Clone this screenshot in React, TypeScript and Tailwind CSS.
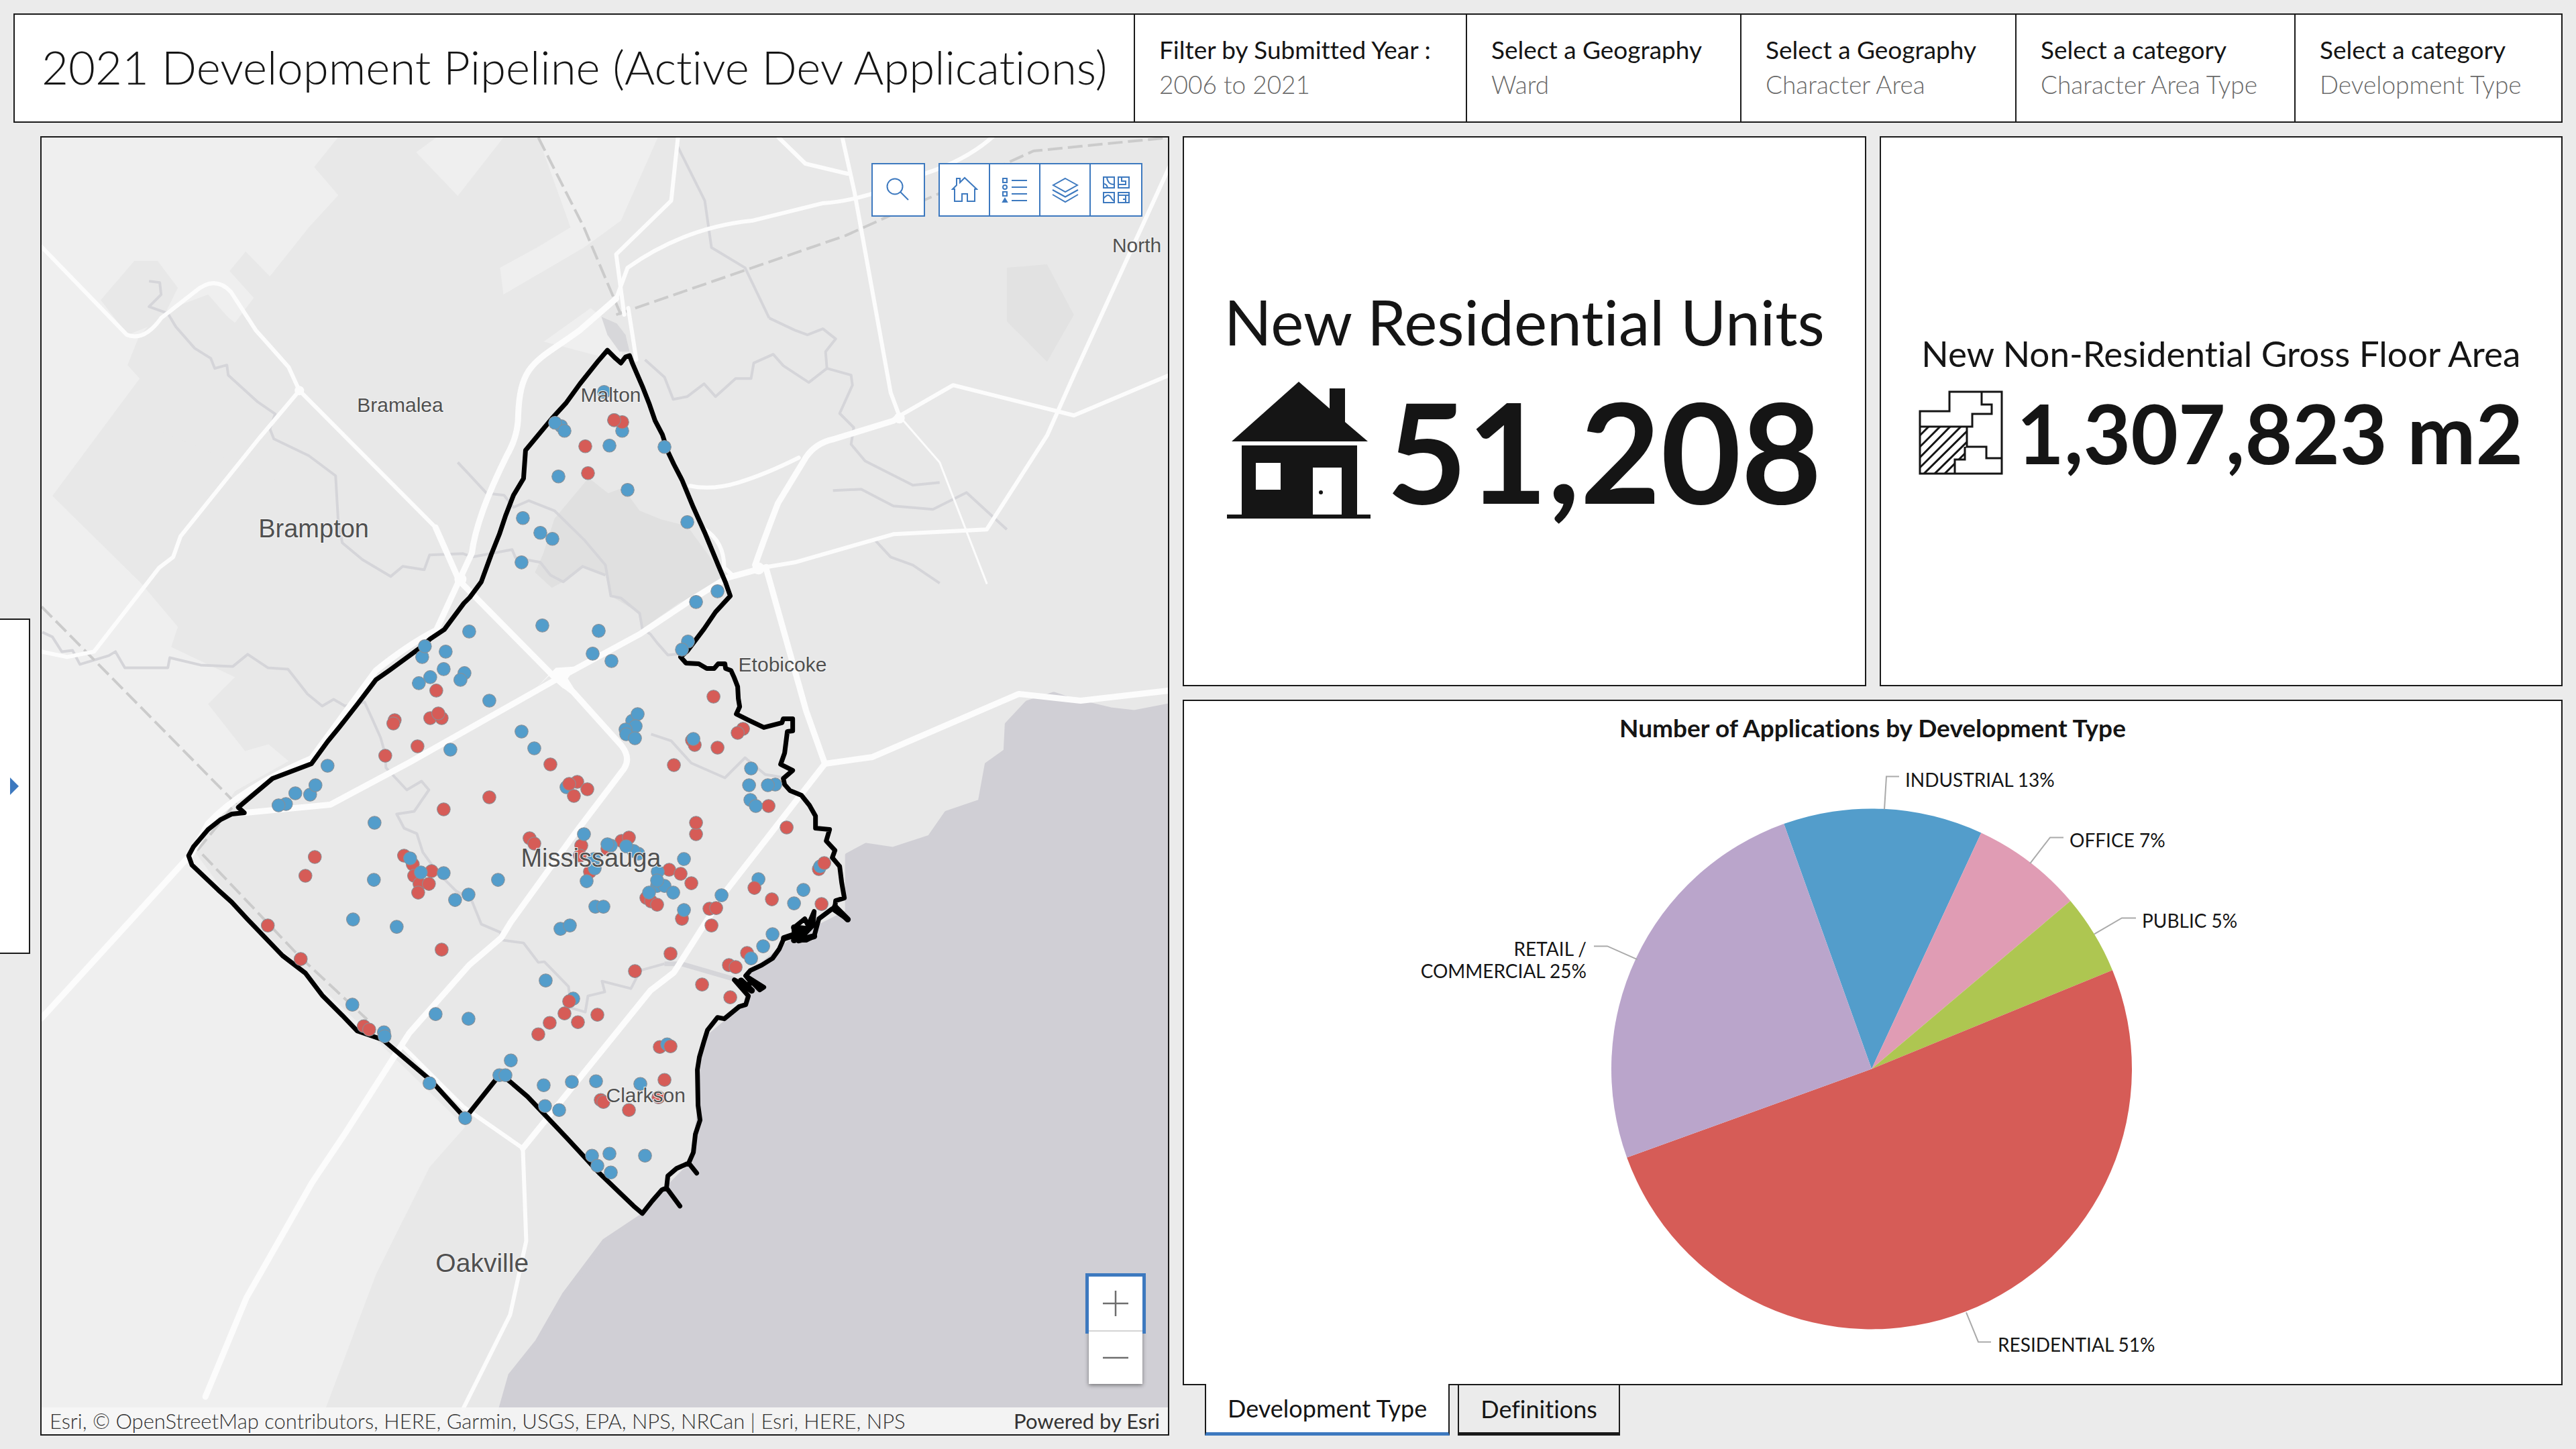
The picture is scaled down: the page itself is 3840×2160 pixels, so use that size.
import { type ReactNode, useState } from "react";
import { clsx } from "clsx";

type Point = [number, number];

const FILTERS = [
  { label: "Filter by Submitted Year :", value: "2006 to 2021" },
  { label: "Select a Geography", value: "Ward" },
  { label: "Select a Geography", value: "Character Area" },
  { label: "Select a category", value: "Character Area Type" },
  { label: "Select a category", value: "Development Type" },
];

const BOUNDARY =
  "M905 523L917 535L925 542L932 533L938 531L942 542L958 579L967 602L976 628L987 649L995 674L1004 693L1016 716L1033 757L1051 797L1070 843L1081 869L1088 889L1066 913L1049 938L1024 971L1014 980L1022 989L1041 990L1053 997L1064 997L1070 990L1080 990L1081 997L1089 1000L1094 1011L1099 1024L1100 1042L1102 1054L1097 1065L1115 1074L1138 1085L1165 1078L1167 1072L1181 1072L1181 1090L1173 1091L1171 1107L1169 1123L1163 1140L1181 1149L1167 1161L1169 1170L1177 1179L1194 1186L1206 1201L1215 1217L1215 1235L1236 1237L1231 1254L1244 1268L1240 1279L1251 1292L1254 1316L1258 1339L1245 1343L1244 1352L1263 1371L1240 1355L1220 1370L1213 1396L1201 1402L1183 1402L1183 1383L1199 1370L1204 1380L1213 1359L1211 1380L1193 1399L1179 1395L1168 1399L1161 1415L1151 1429L1135 1439L1118 1447L1111 1455L1138 1472L1132 1476L1111 1455L1120 1466L1108 1469L1094 1461L1108 1477L1115 1485L1111 1498L1101 1501L1079 1519L1069 1517L1054 1536L1049 1552L1042 1576L1039 1595L1040 1648L1043 1670L1036 1691L1033 1718L1026 1734L1038 1749L1026 1734L1008 1742L995 1753L993 1771L1013 1798L993 1771L986 1774L972 1790L957 1809L944 1798L894 1750L844 1696L786 1635L758 1611L744 1603L693 1667L642 1611L570 1550L532 1537L510 1514L480 1484L455 1451L421 1425L369 1371L345 1345L325 1327L286 1290L281 1276L288 1263L310 1237L329 1222L345 1214L364 1212L355 1204L381 1182L406 1161L464 1139L488 1106L506 1084L532 1051L560 1014L580 1000L625 967L641 953L662 939L691 900L700 891L717 868L732 827L744 797L753 770L765 739L780 714L783 672L822 625L843 602L864 573L892 538Z";

const HARBOUR = "M1183 1402L1201 1385L1183 1383L1190 1402L1213 1396M1168 1399L1195 1390M1108 1469L1120 1477L1104 1462M1244 1352L1263 1371";

const HIGHWAYS = [
  "M62 1518L196 1371L286 1272L310 1228Q360 1175 464 1131L560 1000Q610 960 650 940L684 866L703 825Q710 770 756 678Q772 650 772 620C775 540 800 540 864 493L918 446",
  "M366 1212L492 1200L610 1137L826 1015L953 946L1028 896L1083 862L1142 846",
  "M826 1010L854 1032L926 1112Q940 1130 930 1146L858 1241L761 1375L747 1398L699 1439L610 1540L514 1690L465 1763L367 1935L306 2082",
  "M649 787L684 866L826 1010",
  "M1229 1139L1079 1332L1004 1450L969 1477L779 1712",
  "M1142 850L1201 1060L1229 1139L1300 1129L1518 1035L1610 1045L1742 1030",
  "M1125 843Q1140 800 1159 751L1201 682Q1215 662 1240 656L1331 628L1340 621",
];

const ROADS = [
  "M918 446L935 400Q1020 340 1120 330L1225 304Q1290 300 1377 260Q1440 240 1480 204",
  "M62 369L189 500Q215 510 240 475L290 436Q320 410 344 436L381 493L430 548L446 583L649 787",
  "M446 583L387 653L269 800L258 831L237 847L140 972L100 980L62 972",
  "M936 460L948 537M930 470L918 380L1000 300L1010 206M1049 789Q1079 808 1079 847L1091 858",
  "M1160 206L1200 245L1263 260M1255 206L1273 287L1297 420L1327 586L1340 621",
  "M1028 725Q1060 732 1100 720T1190 683",
  "M1142 846L1184 839L1331 797L1470 790L1560 650L1600 560L1742 250",
  "M1340 621L1420 575L1600 620L1742 560",
  "M779 1712L784 1850L760 1960L690 2100",
  "M779 1712L690 1650L600 1560",
];

const THIN_ROADS = ["M1340 621L1400 690L1470 870"];

const STREAMS = [
  "M222 420L238 422L240 440L222 458L250 468L262 488L290 520L314 535L320 550L338 545L340 560L384 600L410 618L402 640L408 655L460 680L500 710L504 780L510 810L540 835L582 860L600 845L632 850L640 828L690 826L704 831",
  "M704 831L763 820L768 832L805 839L820 858L839 868L868 845L902 858",
  "M63 943L78 950L92 972L108 970L119 991L162 978L172 972L186 996L250 996L253 981L299 992L347 994L369 976L399 996L429 998L458 1035L480 1053L497 1043L514 1053L543 1047L554 1071L567 1100L574 1125L575 1145L606 1178L628 1165L639 1178L617 1210L591 1214L602 1235L621 1243L630 1271L651 1300L680 1329L702 1341L717 1378L745 1390L750 1402L780 1406L802 1435L811 1434L847 1471L851 1503L872 1509L876 1485L901 1479L897 1463L940 1474L954 1447L990 1437",
  "M1146 475L1184 493L1203 500L1226 491L1245 506L1230 525L1232 550L1205 571L1167 546L1152 529L1123 542L1119 565L1096 565L1066 592L1049 573L1024 592L1003 596L990 563L961 537",
  "M1232 550L1268 560L1270 575L1251 617L1272 638L1268 663L1289 688L1360 724L1400 720",
  "M682 690L700 709L725 736L751 739L765 757L788 747L826 762L870 805L902 843L910 889L925 892L953 915L957 938L969 946L980 960L995 977L1014 975",
  "M970 1095L1000 1105L1030 1138L1080 1160L1110 1130L1140 1155L1170 1160",
  "M1241 732L1283 730L1331 755L1390 760L1440 735L1500 790M1302 804L1327 831L1360 843L1400 870",
  "M1010 220L1050 300L1060 370L1110 400L1146 475",
];

const RAILS = ["M62 905L351 1198L295 1267L447 1427L547 1520", "M802 206L870 340L925 470", "M918 470L1260 352L1540 226L1742 206"];

// Residential markers that sit under the non-residential layer
const RESIDENTIAL_SITES: Point[] = [
  [915, 627], [872, 666], [876, 706], [1063, 1039], [650, 1030], [641, 1071], [658, 1071], [653, 1064], [588, 1074],
  [586, 1079], [574, 1127], [622, 1113], [820, 1140], [729, 1189], [661, 1207], [469, 1278], [455, 1306], [602, 1276],
  [615, 1289], [617, 1306], [643, 1299], [625, 1318], [639, 1318], [623, 1331], [658, 1416], [399, 1380], [448, 1430],
  [542, 1530], [550, 1535], [789, 1250], [796, 1258], [1107, 1087], [1099, 1093], [1069, 1115], [1031, 1104],
  [1035, 1111], [1004, 1141], [1037, 1244], [1037, 1227], [1145, 1202], [1172, 1234], [866, 1261], [864, 1276],
  [879, 1300], [905, 1266], [926, 1254], [937, 1249], [997, 1297], [1014, 1303], [1030, 1317], [963, 1339],
  [970, 1344], [979, 1349], [1016, 1370], [1057, 1355], [1067, 1354], [1060, 1380], [1150, 1341], [1220, 1296],
  [1224, 1348], [999, 1422], [946, 1448], [1113, 1421], [1086, 1439], [1096, 1442], [1046, 1468], [1088, 1487],
  [841, 1511], [861, 1524], [890, 1513], [819, 1525], [802, 1542], [983, 1561], [990, 1610], [895, 1640], [899, 1643],
  [981, 1636], [937, 1655],
];

const OTHER_SITES: Point[] = [
  [900, 585], [836, 636], [827, 631], [841, 643], [927, 643], [908, 665], [990, 667], [832, 711], [935, 731],
  [779, 773], [805, 795], [823, 804], [777, 839], [1024, 779], [1069, 882], [1037, 898], [808, 933], [892, 941],
  [883, 975], [911, 986], [1025, 957], [1016, 969], [729, 1045], [699, 942], [629, 980], [633, 964], [664, 972],
  [661, 998], [692, 1004], [686, 1014], [624, 1019], [641, 1010], [777, 1091], [796, 1116], [671, 1118], [488, 1142],
  [462, 1185], [470, 1171], [440, 1183], [426, 1199], [415, 1201], [558, 1227], [557, 1312], [526, 1371], [591, 1382],
  [611, 1280], [627, 1301], [661, 1302], [678, 1342], [698, 1334], [742, 1312], [525, 1498], [649, 1512], [698, 1519],
  [813, 1462], [572, 1539], [573, 1545], [942, 1075], [950, 1065], [947, 1083], [932, 1088], [933, 1095], [946, 1101],
  [1033, 1102], [1119, 1146], [1116, 1171], [1155, 1170], [1144, 1171], [1118, 1193], [1126, 1202], [844, 1174],
  [870, 1244], [910, 1261], [905, 1259], [951, 1273], [944, 1269], [933, 1262], [1019, 1281], [885, 1281],
  [886, 1295], [874, 1314], [887, 1352], [899, 1352], [835, 1385], [849, 1380], [980, 1300], [979, 1321], [990, 1321],
  [979, 1313], [967, 1331], [1003, 1331], [1019, 1357], [1075, 1335], [1130, 1311], [1197, 1327], [1183, 1347],
  [1151, 1393], [1137, 1411], [1119, 1429], [854, 1489], [761, 1581], [744, 1603], [753, 1603], [810, 1618],
  [852, 1613], [888, 1612], [812, 1649], [833, 1655], [954, 1616], [994, 1557], [882, 1723], [890, 1738], [908, 1720],
  [910, 1748], [961, 1723], [1222, 1292], [640, 1615], [693, 1667],
];

const RESIDENTIAL_TOP: Point[] = [
  [927, 630], [915, 627], [855, 1187], [860, 1166], [848, 1169], [875, 1177], [1124, 1324], [1228, 1287], [848, 1493],
  [999, 1560],
];

const PLACES = [
  { name: "Brampton", x: 385, y: 802, size: 38 },
  { name: "Bramalea", x: 532, y: 615, size: 30 },
  { name: "Malton", x: 865, y: 600, size: 30 },
  { name: "Etobicoke", x: 1100, y: 1002, size: 30 },
  { name: "Mississauga", x: 776, y: 1292, size: 38 },
  { name: "Clarkson", x: 903, y: 1643, size: 30 },
  { name: "Oakville", x: 649, y: 1896, size: 39 },
  { name: "North", x: 1657, y: 377, size: 30 },
];

const SLICES = [
  { from: -19.7, to: 24.9, fill: "#539dcb" },
  { from: 24.9, to: 49.8, fill: "#e09cb4" },
  { from: 49.8, to: 67.7, fill: "#aec651" },
  { from: 67.7, to: 250.1, fill: "#d65c57" },
  { from: 250.1, to: 340.3, fill: "#baa5cb" },
];

const SLICE_LABELS = [
  { text: "INDUSTRIAL 13%", x: 2840, y: 1174, line: "M2809 1207L2812 1158H2831" },
  { text: "OFFICE 7%", x: 3085, y: 1264, line: "M3026 1288L3056 1249H3076" },
  { text: "PUBLIC 5%", x: 3193, y: 1384, line: "M3122 1393L3163 1369H3184" },
  { text: "RESIDENTIAL 51%", x: 2978, y: 2016, line: "M2931 1957L2949 2001H2968" },
];

function slicePath(from: number, to: number) {
  const [cx, cy, r] = [2790, 1594, 388];
  const at = (deg: number) => {
    const rad = (deg * Math.PI) / 180;
    return `${cx + r * Math.sin(rad)} ${cy - r * Math.cos(rad)}`;
  };
  return `M${cx} ${cy}L${at(from)}A${r} ${r} 0 ${to - from > 180 ? 1 : 0} 1 ${at(to)}Z`;
}

function Sites({ points, fill }: { points: Point[]; fill: string }) {
  return (
    <g fill={fill} stroke="#8a8f95" strokeWidth={1}>
      {points.map(([x, y], i) => (
        <circle key={i} cx={x} cy={y} r={9.8} />
      ))}
    </g>
  );
}

function PipelineMap() {
  return (
    <svg
      viewBox="61 206 1680 1932"
      preserveAspectRatio="xMidYMid slice"
      className="absolute inset-0 size-full"
      role="img"
      aria-label="Map of active development applications"
    >
      <rect x="60" y="204" width="1684" height="1936" fill="#e8e8e8" />
      <g fill="#efefef">
        <path d="M60 204H505L468 250L504 292L460 340L402 413L366 376L342 405L378 445L350 482L308 448L265 487L240 463L206 505L190 545L208 565L78 740L210 870L265 935L255 965L350 1010L310 1050L365 1120L400 1110L430 1135L350 1180L290 1270L345 1345L560 1550L693 1680L640 1740L560 1900L470 2140H60Z" />
        <path d="M650 206H750L682 293L620 228ZM802 206H980L925 330L870 370L750 440L745 400L800 370L850 340Z" />
        <path d="M810 510L880 460L930 500L925 540Z" />
      </g>
      <g fill="#e8e8e8">
        <path d="M150 448L200 390H235L265 430L240 480L190 500Z" />
        <path d="M230 470L310 440L380 520L420 720L230 640Z" />
      </g>
      <path
        d="M877 713L906 736L928 728L953 762L985 775L1024 785L1083 866L1011 900L957 938L953 915L910 889L902 858L868 845L839 868L822 877L797 854L809 827L826 774Z"
        fill="#e0e0e0"
      />
      <path d="M1500 400L1560 395L1600 470L1560 540L1500 480Z" fill="#e2e2e2" />
      <path d="M896 473L905 500L923 525H938L932 500L919 483Z" fill="#d7d7da" />
      <path
        d="M1742 1052L1690 1062L1655 1058L1600 1045L1570 1035L1530 1048L1500 1080L1498 1120L1470 1140L1460 1195L1410 1212L1385 1248L1330 1266L1290 1260L1262 1275L1262 1360L1180 1402L1120 1450L1110 1500L1050 1550L1040 1670L1030 1735L990 1775L957 1812L900 1850L840 1930L800 2000L760 2050L735 2138H1742Z"
        fill="#d0cfd5"
        stroke="#d0cfd5"
        strokeWidth={6}
        strokeLinejoin="round"
      />
      <g fill="none" stroke="#d5d5d9" strokeLinejoin="round">
        {STREAMS.map((d) => (
          <path key={d} d={d} strokeWidth={4} />
        ))}
        <path d="M990 1437H1015L1094 1460" strokeWidth={7} />
      </g>
      <g fill="none" stroke="#cbcbcb" strokeWidth={4} strokeDasharray="22 8">
        {RAILS.map((d) => (
          <path key={d} d={d} />
        ))}
      </g>
      <g fill="none" stroke="#fcfcfc" strokeLinejoin="round" strokeLinecap="round">
        {THIN_ROADS.map((d) => (
          <path key={d} d={d} strokeWidth={3} />
        ))}
        {ROADS.map((d) => (
          <path key={d} d={d} strokeWidth={6} />
        ))}
        {HIGHWAYS.map((d) => (
          <path key={d} d={d} strokeWidth={9} />
        ))}
      </g>
      <g fill="#fcfcfc">
        <path d="M800 1025L828 996L858 994L846 1012L862 1038L838 1026L818 1008Z" />
        <circle cx="686" cy="864" r="9" />
        <circle cx="1130" cy="848" r="9" />
        <circle cx="1340" cy="624" r="8" />
        <circle cx="446" cy="583" r="7" />
      </g>
      <g fill="none" stroke="#000" strokeLinejoin="round">
        <path d={BOUNDARY} strokeWidth={7} />
        <path d={HARBOUR} strokeWidth={9} strokeLinecap="round" />
      </g>
      <Sites points={RESIDENTIAL_SITES} fill="#d65c57" />
      <Sites points={OTHER_SITES} fill="#539dcb" />
      <Sites points={RESIDENTIAL_TOP} fill="#d65c57" />
      <g fill="#505050" stroke="#f4f4f4" strokeWidth={2} paintOrder="stroke" className="font-['Liberation_Sans',sans-serif]">
        {PLACES.map((place) => (
          <text key={place.name} x={place.x} y={place.y} fontSize={place.size}>
            {place.name}
          </text>
        ))}
      </g>
    </svg>
  );
}

function ToolButton({ label, className, children }: { label: string; className?: string; children: ReactNode }) {
  return (
    <button type="button" aria-label={label} className={clsx("flex h-[76px] items-center justify-center bg-white", className)}>
      <svg viewBox="0 0 40 40" className="size-10" fill="none" stroke="#3d79bf" strokeWidth={2}>
        {children}
      </svg>
    </button>
  );
}

function MapToolbar() {
  return (
    <div className="absolute top-[38px] right-[38px] flex gap-5">
      <div className="border-2 border-[#3d79bf]">
        <ToolButton label="Search" className="w-[76px]">
          <circle cx="15" cy="15" r="11.500" />
          <path d="M23 23L35 35" />
        </ToolButton>
      </div>
      <div className="flex divide-x-2 divide-[#3d79bf] border-2 border-[#3d79bf]">
        <ToolButton label="Default extent" className="w-[75px]">
          <path d="M2 19H5V37H16V26H24V37H35V19H38L20 2L13 9V3H8V13Z" />
        </ToolButton>
        <ToolButton label="Legend" className="w-[75px]">
          <path d="M2 3H8V9H2ZM2 23H8V29H2ZM15 6H38M15 16H38M15 26H38M15 36H38" />
          <circle cx="5" cy="16" r="3" />
          <path d="M5 33L8 38H2Z" fill="#3d79bf" />
        </ToolButton>
        <ToolButton label="Layers" className="w-[75px]">
          <path d="M20 3L38 13L20 23L2 13ZM1 20L20 30.500L39 20M1 27L20 38L39 27" />
        </ToolButton>
        <ToolButton label="Basemaps" className="w-[75px]">
          <path d="M1 1H17V17H1ZM23 1H39V17H23ZM1 24H17V39H1ZM23 24H39V39H23Z" />
          <path d="M6 1Q7 12 17 12M1 11Q6 11 7 17M28 1V7H34V12H23M1 33Q8 24 12 31T17 35M23 28H39M34 28V39M34 34H30" />
        </ToolButton>
      </div>
    </div>
  );
}

function ZoomControl() {
  return (
    <div className="absolute right-[38px] bottom-[75px] flex flex-col shadow-[0_2px_6px_rgba(0,0,0,0.45)]">
      <button
        type="button"
        aria-label="Zoom in"
        className="flex h-20 w-20 items-center justify-center bg-white outline-5 outline-[#3d79bf]"
      >
        <svg viewBox="0 0 40 40" className="size-10" stroke="#6e6e6e" strokeWidth={2.5}>
          <path d="M1 20H39M20 1V39" />
        </svg>
      </button>
      <button
        type="button"
        aria-label="Zoom out"
        className="relative flex h-20 w-20 items-center justify-center border-t-2 border-[#d4d4d4] bg-white"
      >
        <svg viewBox="0 0 40 40" className="size-10" stroke="#6e6e6e" strokeWidth={2.5}>
          <path d="M1 20H39" />
        </svg>
      </button>
    </div>
  );
}

function HouseIcon() {
  return (
    <svg viewBox="1833 568 214 205" className="h-[205px] w-[214px] shrink-0" fill="#151515" aria-hidden="true">
      <path d="M1940 568L1986 608V578H2009V628L2043 657H1840Z" />
      <path fillRule="evenodd" d="M1855 663H2027V767H1855ZM1876 689V729H1913V689ZM1961 696V767H2004V696Z" />
      <path d="M1833 766H2047V772H1833Z" />
      <circle cx="1973" cy="733" r="3" />
    </svg>
  );
}

function FloorPlanIcon() {
  return (
    <svg viewBox="2860 581 126 126" className="size-[126px] shrink-0" fill="none" stroke="#151515" strokeWidth={3} aria-hidden="true">
      <clipPath id="hatch">
        <path d="M2862 635H2932V665H2929V684H2914V705H2862Z" />
      </clipPath>
      <path d="M2862 612H2906V583H2984V705H2862Z" />
      <path d="M2954 583V602H2969V616H2940V635H2862M2932 635V665H2961V682H2984M2929 665V684H2914V705" />
      <path
        clipPath="url(#hatch)"
        d="M2860 650L2876 634M2860 667L2893 634M2860 683L2908 634M2860 698L2924 634M2866 707L2940 634M2882 707L2940 650M2897 707L2940 664"
      />
    </svg>
  );
}

export default function App() {
  const [tab, setTab] = useState("Development Type");

  return (
    <div className="flex h-screen flex-col gap-5 bg-[#ebebeb] py-5 font-[Lato,sans-serif] text-[#151515] [font-variant-ligatures:none]">
      <header className="mx-5 grid h-[163px] shrink-0 grid-cols-[1668fr_495fr_409fr_410fr_416fr_398fr] border-2 border-[#1a1a1a] bg-white">
        <div className="flex min-w-0 items-center pb-1 pl-10">
          <h1 className="text-[69px] font-light whitespace-nowrap">2021 Development Pipeline (Active Dev Applications)</h1>
        </div>
        {FILTERS.map((filter) => (
          <button
            key={filter.value}
            type="button"
            className="flex min-w-0 flex-col justify-center border-l-2 border-[#1a1a1a] pb-1 pl-9 text-left text-[37px] leading-[52px] whitespace-nowrap"
          >
            <span>{filter.label}</span>
            <span className="font-light text-[#6a6a6a]">{filter.value}</span>
          </button>
        ))}
      </header>

      <main className="flex min-h-0 flex-1 pr-5">
        <div className="flex w-[60px] shrink-0 flex-col justify-center">
          <button
            type="button"
            aria-label="Expand side panel"
            className="flex h-[500px] w-[45px] items-center justify-center border-2 border-l-0 border-[#1a1a1a] bg-white"
          >
            <svg viewBox="0 0 13 26" className="h-[26px] w-[13px]" fill="#3d79bf">
              <path d="M0 0L13 13L0 26Z" />
            </svg>
          </button>
        </div>

        <section className="relative mr-5 min-w-0 flex-[1679] overflow-hidden border-2 border-[#1a1a1a]">
          <PipelineMap />
          <MapToolbar />
          <ZoomControl />
          <div className="absolute inset-x-0 bottom-0 flex h-10 items-center justify-between bg-[#f6f6f6]/90 px-3 text-[31px] whitespace-nowrap text-[#323232]">
            <span className="font-light">
              Esri, © OpenStreetMap contributors, HERE, Garmin, USGS, EPA, NPS, NRCan | Esri, HERE, NPS
            </span>
            <span>
              Powered by <a href="#esri">Esri</a>
            </span>
          </div>
        </section>

        <div className="flex min-w-0 flex-[2057] flex-col">
          <div className="flex min-h-0 flex-[822] gap-5">
            <section className="flex flex-1 flex-col items-center justify-center border-2 border-[#1a1a1a] bg-white pb-2">
              <h2 className="text-[93px] leading-[124px] whitespace-nowrap">New Residential Units</h2>
              <div className="flex items-center gap-6">
                <HouseIcon />
                <span className="text-[207px] leading-[260px] font-bold">51,208</span>
              </div>
            </section>
            <section className="flex flex-1 flex-col items-center justify-center border-2 border-[#1a1a1a] bg-white pb-1">
              <h2 className="text-[53px] leading-[68px] whitespace-nowrap">New Non-Residential Gross Floor Area</h2>
              <div className="flex items-center gap-5">
                <FloorPlanIcon />
                <span className="text-[122px] leading-[168px] font-bold whitespace-nowrap">1,307,823 m2</span>
              </div>
            </section>
          </div>

          <section className="mt-5 flex min-h-0 flex-[1020] flex-col border-2 border-[#1a1a1a] bg-white">
            <h2 className="pt-2.5 pb-1 text-center text-[37px] leading-[60px] font-bold">
              Number of Applications by Development Type
            </h2>
            <svg viewBox="1765 1120 2053 943" className="min-h-0 w-full flex-1" role="img" aria-label="Applications by development type">
              {SLICES.map((slice) => (
                <path key={slice.fill} d={slicePath(slice.from, slice.to)} fill={slice.fill} />
              ))}
              <g fill="#151515" fontSize={28}>
                {SLICE_LABELS.map((label) => (
                  <g key={label.text}>
                    <path d={label.line} fill="none" stroke="#aaa" strokeWidth={2} />
                    <text x={label.x} y={label.y}>
                      {label.text}
                    </text>
                  </g>
                ))}
                <path d="M2441 1431L2396 1411H2376" fill="none" stroke="#aaa" strokeWidth={2} />
                <text x={2365} y={1426} textAnchor="end">
                  RETAIL /
                </text>
                <text x={2365} y={1459} textAnchor="end">
                  COMMERCIAL 25%
                </text>
              </g>
            </svg>
          </section>

          <div role="tablist" className="z-10 -mt-[2px] flex h-[77px] shrink-0 gap-3 pl-[33px] text-[36px]">
            {["Development Type", "Definitions"].map((name) => (
              <button
                key={name}
                type="button"
                role="tab"
                aria-selected={tab === name}
                onClick={() => setTab(name)}
                className={clsx(
                  "border-x-2 border-b-5 px-8",
                  tab === name
                    ? "border-x-[#1a1a1a] border-b-[#3d79bf] bg-white"
                    : "border-t-2 border-[#1a1a1a] bg-[#ebebeb]"
                )}
              >
                {name}
              </button>
            ))}
          </div>
        </div>
      </main>
    </div>
  );
}
